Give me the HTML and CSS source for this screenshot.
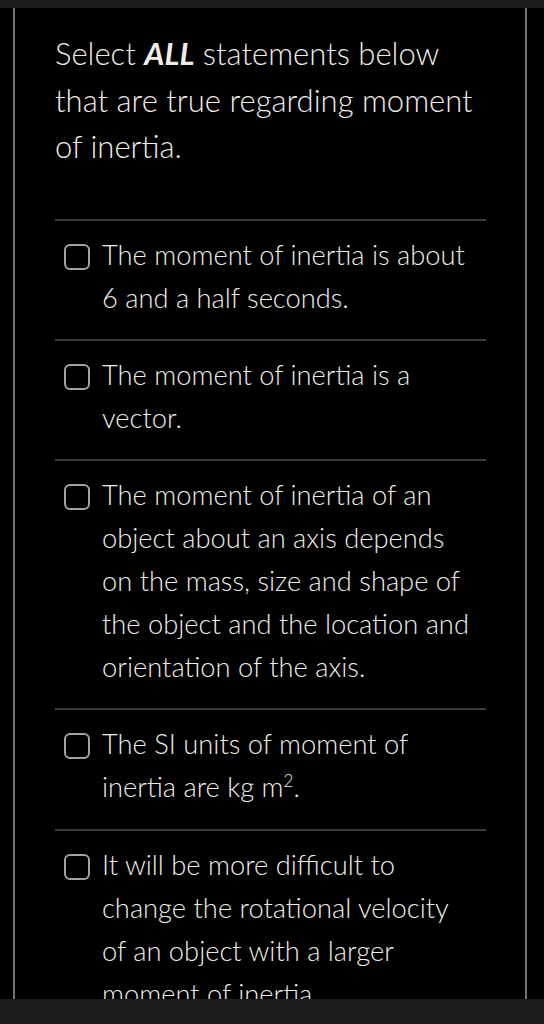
FILE: index.html
```html
<!DOCTYPE html>
<html lang="en">
<head>
<meta charset="utf-8">
<title>Moment of inertia</title>
<link rel="stylesheet" href="styles.css">
</head>
<body>
<div class="topbar"></div>
<main class="frame">
  <div class="content">
    <h1 class="question">Select <strong><em>ALL</em></strong> statements below that are true regarding moment of inertia.</h1>
    <ul class="options">
      <li class="option"><span class="box"></span><span class="label">The moment of inertia is about 6 and a half seconds.</span></li>
      <li class="option"><span class="box"></span><span class="label">The moment of inertia is a vector.</span></li>
      <li class="option"><span class="box"></span><span class="label">The moment of inertia of an object about an axis depends on the mass, size and shape of the object and the location and orientation of the axis.</span></li>
      <li class="option"><span class="box"></span><span class="label">The SI units of moment of inertia are kg <span class="math">m<sup>2</sup></span>.</span></li>
      <li class="option"><span class="box"></span><span class="label">It will be more difficult to change the rotational velocity of an object with a larger moment of inertia.</span></li>
    </ul>
  </div>
</main>
<div class="bottombar"></div>
</body>
</html>
```
FILE: styles.css
```css
html, body {
  margin: 0;
  padding: 0;
  background: #000;
  height: 1024px;
  overflow: hidden;
}
body {
  font-family: "Lato Light", Lato, "Noto Sans", sans-serif;
  font-weight: 300;
  color: #efede6;
  display: flex;
  flex-direction: column;
}
.topbar {
  height: 8px;
  background: #1c1c1c;
  flex: none;
}
.frame {
  height: 991px;
  margin: 0 17px 0 13px;
  border-left: 2px solid #707070;
  border-right: 2px solid #707070;
  overflow: hidden;
  flex: none;
}
.content {
  padding: 22px 39px 0 40px;
}
.question {
  margin: 0 0 49px;
  font-size: 31px;
  line-height: 46.5px;
  font-weight: 300;
}
.question strong {
  font-family: Lato, "Noto Sans", sans-serif;
  font-weight: 700;
}
.options {
  list-style: none;
  margin: 0;
  padding: 0;
}
.option {
  display: flex;
  align-items: flex-start;
  gap: 12px;
  border-top: 2px solid #3a3a3a;
  padding: 12px 9px 20px 9px;
  font-size: 27.3px;
  line-height: 43.1px;
}
.box {
  flex: none;
  width: 22px;
  height: 22px;
  margin-top: 11px;
  border: 2.7px solid #a2a2a2;
  border-radius: 6px;
}
.label {
  flex: 1;
}
.math sup {
  font-size: 17px;
  line-height: 0;
  vertical-align: 10px;
}
.bottombar {
  height: 25px;
  background: #1c1c1c;
  flex: none;
}
```
